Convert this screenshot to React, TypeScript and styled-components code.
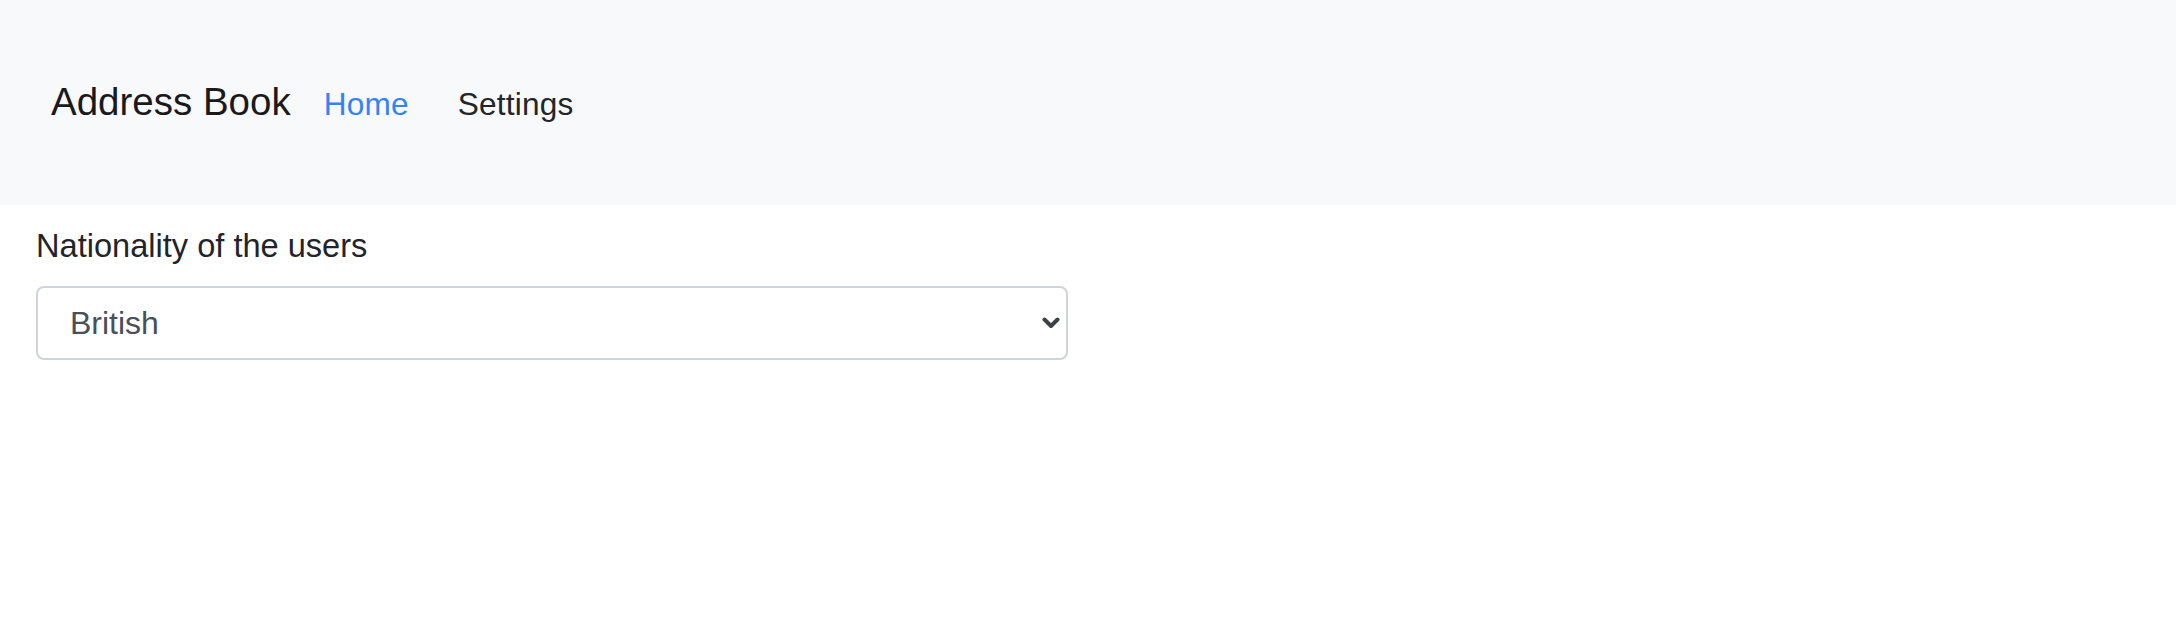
import styled, { createGlobalStyle } from 'styled-components';

const GlobalStyle = createGlobalStyle`
  html, body {
    margin: 0;
    padding: 0;
    background: #ffffff;
    font-family: "Liberation Sans", Arial, sans-serif;
    color: #212529;
  }
`;

const links = [
  { label: 'Home', active: true },
  { label: 'Settings', active: false },
];

const App = () => {
  return (
    <>
      <GlobalStyle />
      <Navbar>
        <NavRow>
          <Brand>Address Book</Brand>
          <NavList>
            {links.map((link) => (
              <NavLink key={link.label} $active={link.active} href="#">
                {link.label}
              </NavLink>
            ))}
          </NavList>
        </NavRow>
      </Navbar>

      <Content>
        <Label htmlFor="nationality">Nationality of the users</Label>
        <SelectWrap>
          <Select id="nationality" defaultValue="GB">
            <option value="GB">British</option>
            <option value="FR">French</option>
            <option value="DE">German</option>
          </Select>
          <Chevron viewBox="0 0 18 12" aria-hidden>
            <path d="M2.5 2.5 L9 9 L15.5 2.5" />
          </Chevron>
        </SelectWrap>
      </Content>
    </>
  );
};

export default App;

const Navbar = styled.nav`
  height: 205px;
  background-color: #f8f9fa;
  padding: 0 51px;
  display: flex;
  align-items: center;
  box-sizing: border-box;
`;

const NavRow = styled.div`
  display: flex;
  align-items: baseline;
  margin-top: -2px;
`;

const Brand = styled.a`
  font-size: 38.5px;
  line-height: 1.5;
  color: #1a1a1a;
  margin-right: 33px;
  white-space: nowrap;
`;

const NavList = styled.div`
  display: flex;
  align-items: baseline;
  gap: 49px;
`;

const NavLink = styled.a<{ $active?: boolean }>`
  font-size: 31.6px;
  line-height: 1.5;
  letter-spacing: 0.2px;
  text-decoration: none;
  color: ${({ $active }) => ($active ? '#3383f7' : '#222529')};
`;

const Content = styled.main`
  padding: 17px 36px 0;
  display: flex;
  flex-direction: column;
  align-items: flex-start;
`;

const Label = styled.label`
  font-size: 32.6px;
  line-height: 48px;
  color: #212529;
  margin-bottom: 16px;
`;

const SelectWrap = styled.div`
  position: relative;
  width: 1032px;
`;

const Select = styled.select`
  appearance: none;
  -webkit-appearance: none;
  width: 100%;
  height: 74px;
  box-sizing: border-box;
  border: 2px solid #d0d4d9;
  border-radius: 8px;
  background: #ffffff;
  padding: 0 60px 0 32px;
  font-family: "Liberation Sans", Arial, sans-serif;
  font-size: 32px;
  color: #495057;
  outline: none;
`;

const Chevron = styled.svg`
  position: absolute;
  right: 8px;
  top: 31px;
  width: 18px;
  height: 12px;
  pointer-events: none;
  fill: none;
  stroke: #3d4247;
  stroke-width: 4;
  stroke-linecap: round;
  stroke-linejoin: round;
`;
